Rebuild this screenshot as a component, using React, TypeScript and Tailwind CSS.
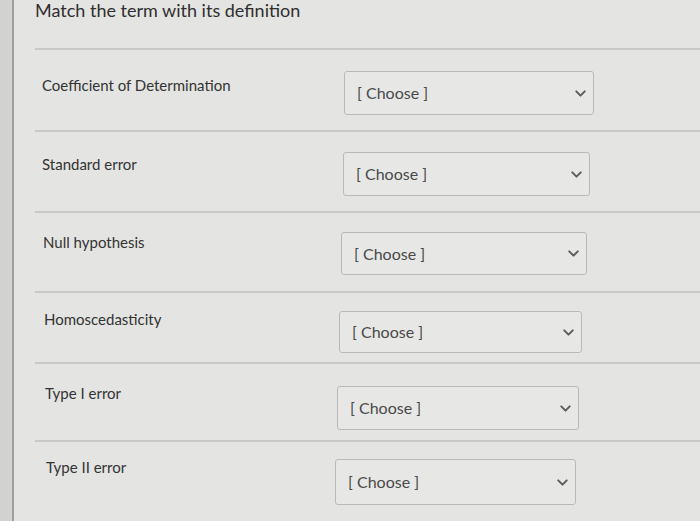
import { ChevronDown } from "lucide-react";

type Row = {
  term: string;
  rowClass: string;
  labelClass: string;
  selectClass: string;
};

const rows: Row[] = [
  { term: "Coefficient of Determination", rowClass: "h-[82px]", labelClass: "pt-[25px] pl-[7px]", selectClass: "mt-[21px] ml-[302px] w-[250px] h-[44px]" },
  { term: "Standard error", rowClass: "h-[81px]", labelClass: "pt-[22px] pl-[7px]", selectClass: "mt-[20px] ml-[301px] w-[247px] h-[44px]" },
  { term: "Null hypothesis", rowClass: "h-[80px]", labelClass: "pt-[19px] pl-[8px]", selectClass: "mt-[19px] ml-[298px] w-[246px] h-[43px]" },
  { term: "Homoscedasticity", rowClass: "h-[71px]", labelClass: "pt-[16px] pl-[9px]", selectClass: "mt-[18px] ml-[295px] w-[243px] h-[42px]" },
  { term: "Type I error", rowClass: "h-[78px]", labelClass: "pt-[19px] pl-[10px]", selectClass: "mt-[22px] ml-[292px] w-[242px] h-[44px]" },
  { term: "Type II error", rowClass: "h-[81px]", labelClass: "pt-[15px] pl-[11px]", selectClass: "mt-[17px] ml-[289px] w-[241px] h-[46px]" },
];

function ChooseBox({ className }: { className: string }) {
  return (
    <div
      className={`${className} flex shrink-0 items-center justify-between rounded-[3px] border border-[#b9b9b6] bg-[#e7e7e5] pl-[12px] pr-[4px]`}
    >
      <span className="text-[16px] text-[#4a4a4a]">[ Choose ]</span>
      <ChevronDown size={17} strokeWidth={2.8} className="text-[#5c5c5c]" />
    </div>
  );
}

export default function App() {
  return (
    <div
      className="flex h-[521px] w-[700px] overflow-hidden bg-[#e4e4e2]"
      style={{ fontFamily: "Lato, 'Noto Sans', sans-serif" }}
    >
      {/* left gutter */}
      <div className="w-[14px] shrink-0 border-r-2 border-[#9e9e9c] bg-[#d2d2d0]" />

      <div className="flex-1 pl-[21px]">
        <h2 className="-mt-[1px] h-[49px] text-[18px] leading-[22px] text-[#2f2f2f]">
          Match the term with its definition
        </h2>

        {rows.map((r) => (
          <div key={r.term} className={`${r.rowClass} flex border-t-2 border-[#c8c8c6]`}>
            <div className={`${r.labelClass} w-0 shrink-0 whitespace-nowrap text-[15px] leading-[20px] text-[#333]`}>
              {r.term}
            </div>
            <ChooseBox className={r.selectClass} />
          </div>
        ))}
      </div>
    </div>
  );
}
